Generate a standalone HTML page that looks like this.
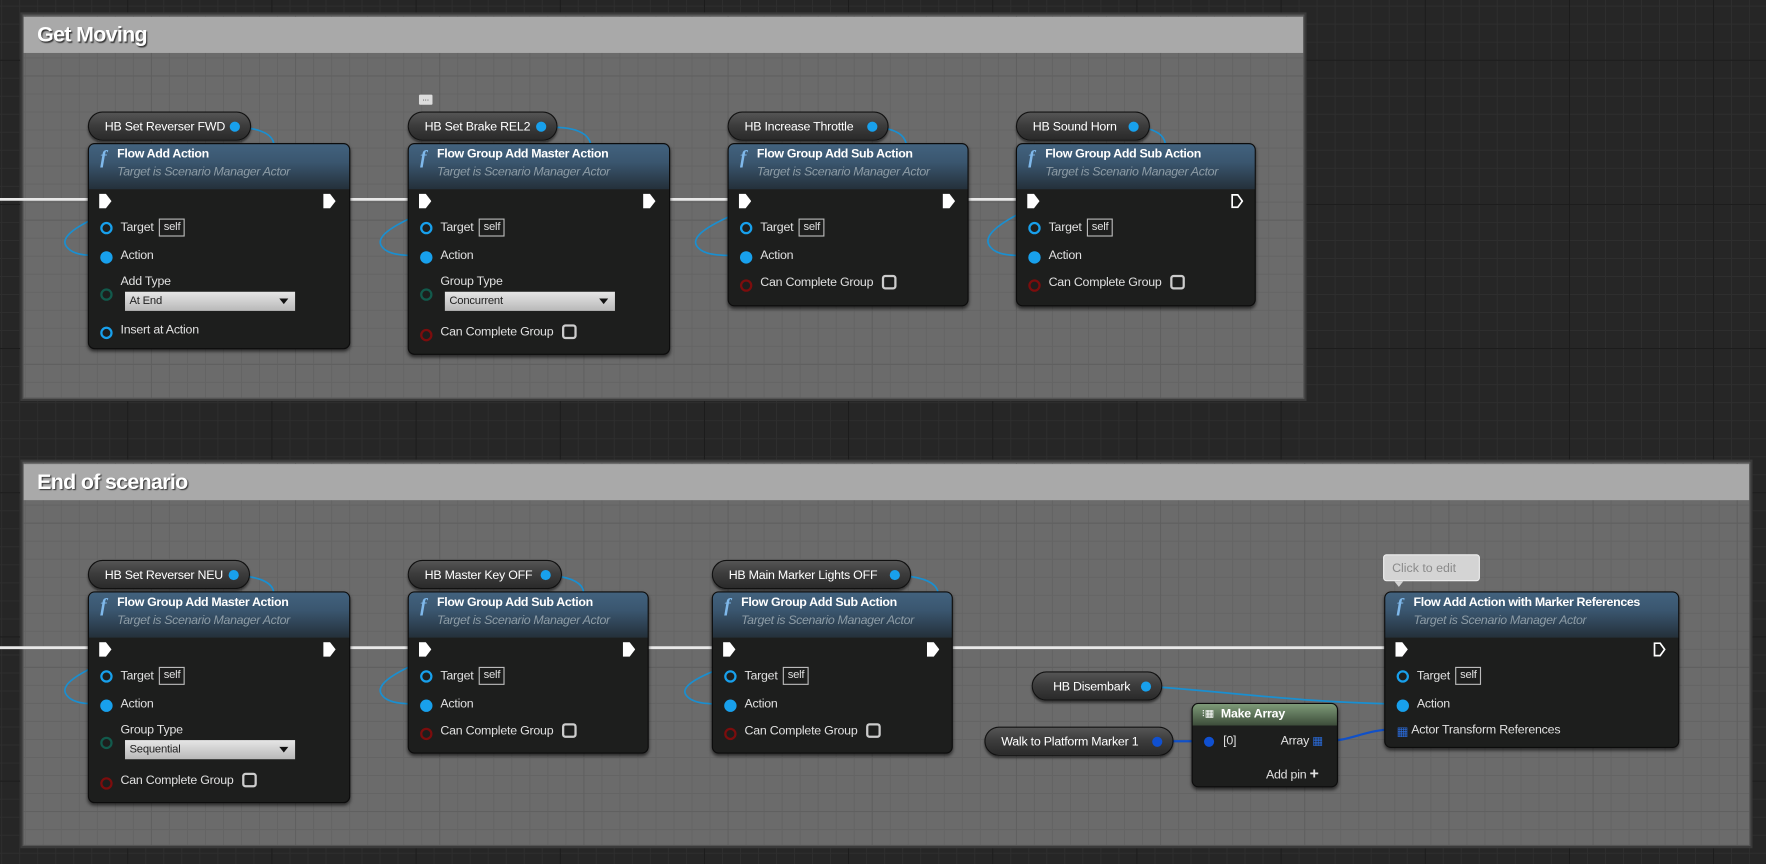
<!DOCTYPE html>
<html><head><meta charset="utf-8"><style>
html,body{margin:0;padding:0;width:1766px;height:864px;overflow:hidden;background:#262626}
#w{position:absolute;left:0;top:0;width:1568px;height:767px;transform:scale(1.12628,1.12647);transform-origin:0 0;font-family:"Liberation Sans",sans-serif;
background-color:#262626;
background-image:linear-gradient(#1b1b1b 1px,transparent 1px),linear-gradient(90deg,#1b1b1b 1px,transparent 1px),linear-gradient(#2e2e2e 1px,transparent 1px),linear-gradient(90deg,#2e2e2e 1px,transparent 1px);
background-size:128px 128px,128px 128px,16px 16px,16px 16px;background-position:-15px 53px,-15px 53px,1px 5px,1px 5px}
.cm{position:absolute;background-color:#6b6b6b;border:1px solid #555;
background-image:linear-gradient(#5f5f5f 1px,transparent 1px),linear-gradient(90deg,#5f5f5f 1px,transparent 1px),linear-gradient(#646464 1px,transparent 1px),linear-gradient(90deg,#646464 1px,transparent 1px);
background-size:128px 128px,128px 128px,16px 16px,16px 16px;background-position:-15px 53px,-15px 53px,1px 5px,1px 5px;box-shadow:0 0 0 2px #3a3a3a}
.ch{position:absolute;left:0;right:0;top:1px;height:32px;background:#a9a9a9;color:#fff;font-size:19px;font-weight:bold;line-height:34px;padding-left:12px;text-shadow:1px 1px 1px #333;letter-spacing:-0.6px}
.node{position:absolute;background:#1d1e1d;border:1px solid #0c0c0c;border-radius:6px;box-shadow:0 2px 3px rgba(0,0,0,.6);color:#e0e0e0;font-size:11px;letter-spacing:-0.2px}
.hd{position:absolute;left:0;right:0;top:0;height:40px;border-radius:5px 5px 0 0;background:linear-gradient(to bottom,#42627e 0%,#3a566f 40%,#24303a 100%)}
.hd .f{position:absolute;left:10px;top:2px;color:#7fb8ea;font-family:"Liberation Serif",serif;font-style:italic;font-weight:bold;font-size:17px}
.hd .t{position:absolute;left:25px;top:3px;font-weight:bold;color:#fff;font-size:11px;letter-spacing:-0.3px}
.hd .s{position:absolute;left:25px;top:19px;font-style:italic;color:#8d9ca6;font-size:11px;letter-spacing:-0.3px}
.r{position:absolute;left:28px;white-space:nowrap}
.p{position:absolute;left:10px;width:7px;height:7px;border:2px solid #18a0ec;border-radius:50%}
.p.f{background:#18a0ec}
.p.g{border-color:#125a4c}
.p.red{border-color:#7c0d0d}
.slf{display:inline-block;border:1px solid #bbb;padding:0 3px;font-size:10px;line-height:14px;margin-left:5px;vertical-align:1px}
.dd{position:absolute;left:32px;height:17px;background:linear-gradient(#e6e6e6,#b8b8b8);color:#222;font-size:10px;line-height:17px;padding-left:4px;box-sizing:border-box}
.dd:after{content:"";position:absolute;right:6px;top:6px;border:4px solid transparent;border-top:5px solid #111}
.cb{display:inline-block;width:9px;height:9px;border:2px solid #ccc;border-radius:3px;margin-left:8px;vertical-align:-3px}
.ex{position:absolute;width:11px;height:13px}
.pill{position:absolute;height:26px;border-radius:13px;background:linear-gradient(#555 0%,#3d3d3d 45%,#2a2a2a 100%);border:1px solid #111;box-shadow:0 2px 2px rgba(0,0,0,.5);color:#fff;font-size:11px;letter-spacing:-0.2px;line-height:26px;box-sizing:border-box;padding-left:14px;white-space:nowrap}
.pill i{position:absolute;right:9px;top:8px;width:9px;height:9px;border-radius:50%;background:#18a0ec}
</style></head><body><div id="w">

<div class="cm" style="left:20px;top:13px;width:1136px;height:339px"><div class="ch">Get Moving</div></div>
<div class="cm" style="left:20px;top:410px;width:1532px;height:339px"><div class="ch">End of scenario</div></div>

<svg style="position:absolute;left:0;top:0" width="1568" height="767">
<g stroke="#e8e8e8" stroke-width="2.5" fill="none">
<line x1="0" y1="177" x2="80" y2="177"/><line x1="300" y1="177" x2="364" y2="177"/><line x1="584" y1="177" x2="648" y2="177"/><line x1="848" y1="177" x2="904" y2="177"/>
<line x1="0" y1="575" x2="80" y2="575"/><line x1="300" y1="575" x2="364" y2="575"/><line x1="564" y1="575" x2="634" y2="575"/><line x1="834" y1="575" x2="1231" y2="575"/>
</g>
<g stroke="#1a8fd0" stroke-width="1.5" fill="none">
<path d="M208 113 C250 113,250 135,230 140 C150 170,40 200,60 220 C66 227,80 227,92 227"/>
<path d="M492 113 C530 113,530 135,515 140 C430 170,320 200,340 220 C346 227,362 227,376 227"/>
<path d="M774 113 C810 113,810 135,795 140 C710 170,600 200,620 220 C626 227,642 227,660 227"/>
<path d="M1006 113 C1040 113,1040 135,1025 140 C950 170,860 200,880 220 C886 227,900 227,916 227"/>
<path d="M207 511 C250 511,250 533,230 538 C150 568,40 598,60 618 C66 625,80 625,92 625"/>
<path d="M484 511 C525 511,525 533,505 538 C430 568,320 598,340 618 C346 625,362 625,376 625"/>
<path d="M794 511 C840 511,840 533,820 538 C730 568,590 598,610 618 C616 625,630 625,646 625"/>
<path d="M1016 609 C1100 615,1150 623,1240 625"/>
</g>
<g stroke="#1050c8" stroke-width="2" fill="none">
<path d="M1026 658 L1070 658"/><path d="M1176 658 C1200 658,1210 648,1240 647"/>
</g>
</svg>

<!-- Row 1 -->
<div class="pill" style="left:78px;top:99px;width:145px">HB Set Reverser FWD<i></i></div>
<div class="node" style="left:78px;top:127px;width:231px;height:181px"><div class="hd"><span class="f">f</span><span class="t">Flow Add Action</span><span class="s">Target is Scenario Manager Actor</span></div>
<svg class="ex" style="left:9px;top:44px" viewBox="0 0 11 13"><path d="M0 0H6L11 6.5L6 13H0Z" fill="#fff"/></svg>
<svg class="ex" style="left:208px;top:44px" viewBox="0 0 11 13"><path d="M0 0H6L11 6.5L6 13H0Z" fill="#fff"/></svg>
<div class="p" style="top:69px"></div><div class="r" style="top:66px">Target<span class="slf">self</span></div>
<div class="p f" style="top:95px"></div><div class="r" style="top:93px">Action</div>
<div class="r" style="top:116px">Add Type</div><div class="p g" style="top:128px"></div><div class="dd" style="top:131px;width:151px">At End</div>
<div class="p" style="top:162px"></div><div class="r" style="top:159px">Insert at Action</div></div>

<div style="position:absolute;left:372px;top:84px;width:12px;height:9px;background:#ddd;border-radius:1px;font-size:7px;color:#333;line-height:8px;text-align:center">...</div>
<div class="pill" style="left:362px;top:99px;width:133px">HB Set Brake REL2<i></i></div>
<div class="node" style="left:362px;top:127px;width:231px;height:186px"><div class="hd"><span class="f">f</span><span class="t">Flow Group Add Master Action</span><span class="s">Target is Scenario Manager Actor</span></div>
<svg class="ex" style="left:9px;top:44px" viewBox="0 0 11 13"><path d="M0 0H6L11 6.5L6 13H0Z" fill="#fff"/></svg>
<svg class="ex" style="left:208px;top:44px" viewBox="0 0 11 13"><path d="M0 0H6L11 6.5L6 13H0Z" fill="#fff"/></svg>
<div class="p" style="top:69px"></div><div class="r" style="top:66px">Target<span class="slf">self</span></div>
<div class="p f" style="top:95px"></div><div class="r" style="top:93px">Action</div>
<div class="r" style="top:116px">Group Type</div><div class="p g" style="top:128px"></div><div class="dd" style="top:131px;width:151px">Concurrent</div>
<div class="p red" style="top:164px"></div><div class="r" style="top:160px">Can Complete Group<span class="cb"></span></div></div>

<div class="pill" style="left:646px;top:99px;width:143px">HB Increase Throttle<i></i></div>
<div class="node" style="left:646px;top:127px;width:212px;height:143px"><div class="hd"><span class="f">f</span><span class="t">Flow Group Add Sub Action</span><span class="s">Target is Scenario Manager Actor</span></div>
<svg class="ex" style="left:9px;top:44px" viewBox="0 0 11 13"><path d="M0 0H6L11 6.5L6 13H0Z" fill="#fff"/></svg>
<svg class="ex" style="left:190px;top:44px" viewBox="0 0 11 13"><path d="M0 0H6L11 6.5L6 13H0Z" fill="#fff"/></svg>
<div class="p" style="top:69px"></div><div class="r" style="top:66px">Target<span class="slf">self</span></div>
<div class="p f" style="top:95px"></div><div class="r" style="top:93px">Action</div>
<div class="p red" style="top:120px"></div><div class="r" style="top:116px">Can Complete Group<span class="cb"></span></div></div>

<div class="pill" style="left:902px;top:99px;width:119px">HB Sound Horn<i></i></div>
<div class="node" style="left:902px;top:127px;width:211px;height:143px"><div class="hd"><span class="f">f</span><span class="t">Flow Group Add Sub Action</span><span class="s">Target is Scenario Manager Actor</span></div>
<svg class="ex" style="left:9px;top:44px" viewBox="0 0 11 13"><path d="M0 0H6L11 6.5L6 13H0Z" fill="#fff"/></svg>
<svg class="ex" style="left:190px;top:44px" viewBox="0 0 11 13"><path d="M1 1H6L10 6.5L6 12H1Z" fill="none" stroke="#fff" stroke-width="1.5"/></svg>
<div class="p" style="top:69px"></div><div class="r" style="top:66px">Target<span class="slf">self</span></div>
<div class="p f" style="top:95px"></div><div class="r" style="top:93px">Action</div>
<div class="p red" style="top:120px"></div><div class="r" style="top:116px">Can Complete Group<span class="cb"></span></div></div>

<!-- Row 2 -->
<div class="pill" style="left:78px;top:497px;width:144px">HB Set Reverser NEU<i></i></div>
<div class="node" style="left:78px;top:525px;width:231px;height:186px"><div class="hd"><span class="f">f</span><span class="t">Flow Group Add Master Action</span><span class="s">Target is Scenario Manager Actor</span></div>
<svg class="ex" style="left:9px;top:44px" viewBox="0 0 11 13"><path d="M0 0H6L11 6.5L6 13H0Z" fill="#fff"/></svg>
<svg class="ex" style="left:208px;top:44px" viewBox="0 0 11 13"><path d="M0 0H6L11 6.5L6 13H0Z" fill="#fff"/></svg>
<div class="p" style="top:69px"></div><div class="r" style="top:66px">Target<span class="slf">self</span></div>
<div class="p f" style="top:95px"></div><div class="r" style="top:93px">Action</div>
<div class="r" style="top:116px">Group Type</div><div class="p g" style="top:128px"></div><div class="dd" style="top:131px;width:151px">Sequential</div>
<div class="p red" style="top:164px"></div><div class="r" style="top:160px">Can Complete Group<span class="cb"></span></div></div>

<div class="pill" style="left:362px;top:497px;width:137px">HB Master Key OFF<i></i></div>
<div class="node" style="left:362px;top:525px;width:212px;height:142px"><div class="hd"><span class="f">f</span><span class="t">Flow Group Add Sub Action</span><span class="s">Target is Scenario Manager Actor</span></div>
<svg class="ex" style="left:9px;top:44px" viewBox="0 0 11 13"><path d="M0 0H6L11 6.5L6 13H0Z" fill="#fff"/></svg>
<svg class="ex" style="left:190px;top:44px" viewBox="0 0 11 13"><path d="M0 0H6L11 6.5L6 13H0Z" fill="#fff"/></svg>
<div class="p" style="top:69px"></div><div class="r" style="top:66px">Target<span class="slf">self</span></div>
<div class="p f" style="top:95px"></div><div class="r" style="top:93px">Action</div>
<div class="p red" style="top:120px"></div><div class="r" style="top:116px">Can Complete Group<span class="cb"></span></div></div>

<div class="pill" style="left:632px;top:497px;width:177px">HB Main Marker Lights OFF<i></i></div>
<div class="node" style="left:632px;top:525px;width:212px;height:142px"><div class="hd"><span class="f">f</span><span class="t">Flow Group Add Sub Action</span><span class="s">Target is Scenario Manager Actor</span></div>
<svg class="ex" style="left:9px;top:44px" viewBox="0 0 11 13"><path d="M0 0H6L11 6.5L6 13H0Z" fill="#fff"/></svg>
<svg class="ex" style="left:190px;top:44px" viewBox="0 0 11 13"><path d="M0 0H6L11 6.5L6 13H0Z" fill="#fff"/></svg>
<div class="p" style="top:69px"></div><div class="r" style="top:66px">Target<span class="slf">self</span></div>
<div class="p f" style="top:95px"></div><div class="r" style="top:93px">Action</div>
<div class="p red" style="top:120px"></div><div class="r" style="top:116px">Can Complete Group<span class="cb"></span></div></div>

<div class="pill" style="left:916px;top:596px;width:116px;padding-left:18px">HB Disembark<i></i></div>
<div class="pill" style="left:874px;top:645px;width:168px">Walk to Platform Marker 1<i style="background:#1050d0"></i></div>

<div class="node" style="left:1058px;top:624px;width:128px;height:73px"><div style="position:absolute;left:0;right:0;top:0;height:19px;border-radius:5px 5px 0 0;background:linear-gradient(#7d9a78,#3d4d3a)"></div>
<div style="position:absolute;left:8px;top:3px;color:#fff;font-size:9px">⁝▦</div><div style="position:absolute;left:25px;top:3px;color:#fff;font-weight:bold">Make Array</div>
<div style="position:absolute;left:10px;top:29px;width:9px;height:9px;border-radius:50%;background:#1050d0"></div><div class="r" style="left:27px;top:27px">[0]</div>
<div class="r" style="left:78px;top:27px">Array <span style="color:#2a6ad8;font-size:10px">▦</span></div>
<div class="r" style="left:65px;top:56px">Add pin <b style="font-size:14px;line-height:10px">+</b></div></div>

<div style="position:absolute;left:1228px;top:492px;width:86px;height:24px;background:#d4d4d4;border:1px solid #eee;border-radius:3px;color:#8a8a8a;font-size:11px;line-height:24px;padding-left:7px;box-sizing:border-box">Click to edit</div>
<div style="position:absolute;left:1238px;top:516px;border:4px solid transparent;border-top:5px solid #d4d4d4"></div>
<div class="node" style="left:1229px;top:525px;width:260px;height:137px"><div class="hd"><span class="f">f</span><span class="t">Flow Add Action with Marker References</span><span class="s">Target is Scenario Manager Actor</span></div>
<svg class="ex" style="left:9px;top:44px" viewBox="0 0 11 13"><path d="M0 0H6L11 6.5L6 13H0Z" fill="#fff"/></svg>
<svg class="ex" style="left:238px;top:44px" viewBox="0 0 11 13"><path d="M1 1H6L10 6.5L6 12H1Z" fill="none" stroke="#fff" stroke-width="1.5"/></svg>
<div class="p" style="top:69px"></div><div class="r" style="top:66px">Target<span class="slf">self</span></div>
<div class="p f" style="top:95px"></div><div class="r" style="top:93px">Action</div>
<div style="position:absolute;left:10px;top:117px;color:#2a6ad8;font-size:11px">▦</div><div class="r" style="left:23px;top:116px">Actor Transform References</div></div>

</div></body></html>
